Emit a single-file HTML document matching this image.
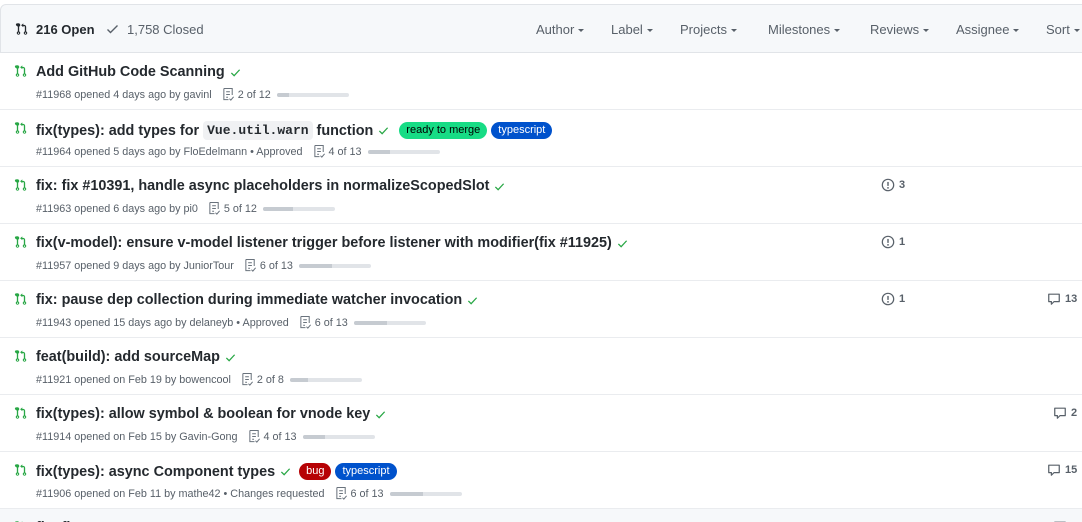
<!DOCTYPE html>
<html><head><meta charset="utf-8"><style>
*{box-sizing:border-box;margin:0;padding:0}
html,body{width:1082px;height:522px;overflow:hidden}
body{background:#fff;font-family:"Liberation Sans",sans-serif;color:#24292e;position:relative}
.hdr{position:absolute;left:0;top:4px;width:1090px;height:49px;background:#f6f8fa;border:1px solid #e1e4e8;border-radius:6px 0 0 0}
.hdr .t{position:absolute;top:17px;font-size:13px;color:#586069}
.caret{display:inline-block;width:0;height:0;border-left:3px solid transparent;border-right:3px solid transparent;border-top:3px solid #586069;vertical-align:middle;margin-left:4px}
.row{position:absolute;left:0;width:1090px;height:57px;border-bottom:1px solid #eaecef;overflow:hidden}
.ico{position:absolute;left:14px;top:10px}
.title{position:absolute;left:36px;top:11px;font-size:14.4px;font-weight:bold;white-space:nowrap;display:flex;align-items:center}
.meta{position:absolute;left:36px;top:34px;font-size:10.8px;color:#586069;white-space:nowrap;display:flex;align-items:center}
.chk{margin-left:5px}
.lbl{font-size:11px;font-weight:normal;border-radius:10px;padding:2px 7px;margin-left:4px;line-height:13px}
code{font-family:"Liberation Mono",monospace;font-size:13px;background:#f0f1f3;padding:2px 4px;border-radius:4px;margin:0 4px}
.task{display:inline-flex;align-items:center;margin-left:10px}
.bar{display:inline-block;width:72px;height:4px;background:#e1e4e8;border-radius:2px;margin-left:6px;position:relative;overflow:hidden}
.bar i{position:absolute;left:0;top:0;bottom:0;background:#c6cbd1}
.sn{position:absolute;top:11px;font-size:11px;font-weight:bold;color:#586069;display:flex;align-items:center}
.sn svg{margin-right:4px}
</style></head><body>
<div class="hdr">
 <svg style="position:absolute;left:14px;top:16px" width="14" height="16" viewBox="0 0 16 16" fill="#24292e"><path d="M4 3a1.5 1.5 0 1 0 0 .01zM3.25 5.3v5.4a2 2 0 1 0 1.5 0V5.3a2 2 0 1 0-1.5 0zM4 12a.75.75 0 1 1 0 1.5A.75.75 0 0 1 4 12zM12.75 10.7V5.5c0-1.2-1-2.25-2.25-2.25H9.5V1.5L7 3.75 9.5 6V4.75h1c.4 0 .75.35.75.75v5.2a2 2 0 1 0 1.5 0zM12 12a.75.75 0 1 1 0 1.5.75.75 0 0 1 0-1.5z"/></svg>
 <span class="t" style="left:35px;color:#24292e;font-weight:bold">216 Open</span>
 <svg style="position:absolute;left:105px;top:18px" width="13" height="12" viewBox="0 0 12 12"><path d="M1 6.5l3 3 7-7" stroke="#586069" stroke-width="1.4" fill="none"/></svg>
 <span class="t" style="left:126px">1,758 Closed</span>
 <span class="t" style="left:535px">Author<i class="caret"></i></span>
 <span class="t" style="left:610px">Label<i class="caret"></i></span>
 <span class="t" style="left:679px">Projects<i class="caret"></i></span>
 <span class="t" style="left:767px">Milestones<i class="caret"></i></span>
 <span class="t" style="left:869px">Reviews<i class="caret"></i></span>
 <span class="t" style="left:955px">Assignee<i class="caret"></i></span>
 <span class="t" style="left:1045px">Sort<i class="caret"></i></span>
</div>

<svg width="0" height="0" style="position:absolute"><defs>
<symbol id="pr" viewBox="0 0 16 16"><path fill="#28a745" d="M4 3a1.5 1.5 0 1 0 0 .01zM3.25 5.3v5.4a2 2 0 1 0 1.5 0V5.3a2 2 0 1 0-1.5 0zM4 12a.75.75 0 1 1 0 1.5A.75.75 0 0 1 4 12zM12.75 10.7V5.5c0-1.2-1-2.25-2.25-2.25H9.5V1.5L7 3.75 9.5 6V4.75h1c.4 0 .75.35.75.75v5.2a2 2 0 1 0 1.5 0zM12 12a.75.75 0 1 1 0 1.5.75.75 0 0 1 0-1.5z"/></symbol>
<symbol id="ck" viewBox="0 0 12 12"><path d="M1.5 6.5l3 3 6-6.5" stroke="#28a745" stroke-width="1.4" fill="none"/></symbol>
<symbol id="tk" viewBox="0 0 14 16"><path d="M2 1.5h9v7M2 1.5v12h5M4.5 5h4M4.5 8h4M4.5 11h2M8 12.5l1.5 1.5 3-3.5" stroke="#6a737d" stroke-width="1.1" fill="none"/></symbol>
<symbol id="is" viewBox="0 0 16 16"><circle cx="8" cy="8" r="6.5" stroke="#586069" stroke-width="1.4" fill="none"/><path d="M8 4.5v4.5" stroke="#586069" stroke-width="1.6"/><circle cx="8" cy="11.3" r="1" fill="#586069"/></symbol>
<symbol id="cm" viewBox="0 0 16 16"><path d="M2 2.5h12v8.5H8l-3 3v-3H2z" stroke="#586069" stroke-width="1.4" fill="none" stroke-linejoin="round"/></symbol>
</defs></svg>

<div class="row" style="top:53px">
 <svg class="ico" width="14" height="16"><use href="#pr"/></svg>
 <div class="title">Add GitHub Code Scanning<svg class="chk" width="11" height="11"><use href="#ck"/></svg></div>
 <div class="meta">#11968 opened 4 days ago by gavinl<span class="task"><svg width="13" height="15"><use href="#tk"/></svg>&nbsp;2 of 12<span class="bar"><i style="width:17%"></i></span></span></div>
</div>
<div class="row" style="top:110px">
 <svg class="ico" width="14" height="16"><use href="#pr"/></svg>
 <div class="title">fix(types): add types for<code>Vue.util.warn</code>function<svg class="chk" width="11" height="11"><use href="#ck"/></svg><span class="lbl" style="background:#17dc85;color:#000;margin-left:10px">ready to merge</span><span class="lbl" style="background:#0052cc;color:#fff">typescript</span></div>
 <div class="meta">#11964 opened 5 days ago by FloEdelmann • Approved<span class="task"><svg width="13" height="15"><use href="#tk"/></svg>&nbsp;4 of 13<span class="bar"><i style="width:31%"></i></span></span></div>
</div>
<div class="row" style="top:167px">
 <svg class="ico" width="14" height="16"><use href="#pr"/></svg>
 <div class="title">fix: fix #10391, handle async placeholders in normalizeScopedSlot<svg class="chk" width="11" height="11"><use href="#ck"/></svg></div>
 <div class="meta">#11963 opened 6 days ago by pi0<span class="task"><svg width="13" height="15"><use href="#tk"/></svg>&nbsp;5 of 12<span class="bar"><i style="width:42%"></i></span></span></div>
 <div class="sn" style="left:881px"><svg width="14" height="14"><use href="#is"/></svg>3</div>
</div>
<div class="row" style="top:224px">
 <svg class="ico" width="14" height="16"><use href="#pr"/></svg>
 <div class="title">fix(v-model): ensure v-model listener trigger before listener with modifier(fix #11925)<svg class="chk" width="11" height="11"><use href="#ck"/></svg></div>
 <div class="meta">#11957 opened 9 days ago by JuniorTour<span class="task"><svg width="13" height="15"><use href="#tk"/></svg>&nbsp;6 of 13<span class="bar"><i style="width:46%"></i></span></span></div>
 <div class="sn" style="left:881px"><svg width="14" height="14"><use href="#is"/></svg>1</div>
</div>
<div class="row" style="top:281px">
 <svg class="ico" width="14" height="16"><use href="#pr"/></svg>
 <div class="title">fix: pause dep collection during immediate watcher invocation<svg class="chk" width="11" height="11"><use href="#ck"/></svg></div>
 <div class="meta">#11943 opened 15 days ago by delaneyb • Approved<span class="task"><svg width="13" height="15"><use href="#tk"/></svg>&nbsp;6 of 13<span class="bar"><i style="width:46%"></i></span></span></div>
 <div class="sn" style="left:881px"><svg width="14" height="14"><use href="#is"/></svg>1</div>
 <div class="sn" style="left:1047px"><svg width="14" height="14"><use href="#cm"/></svg>13</div>
</div>
<div class="row" style="top:338px">
 <svg class="ico" width="14" height="16"><use href="#pr"/></svg>
 <div class="title">feat(build): add sourceMap<svg class="chk" width="11" height="11"><use href="#ck"/></svg></div>
 <div class="meta">#11921 opened on Feb 19 by bowencool<span class="task"><svg width="13" height="15"><use href="#tk"/></svg>&nbsp;2 of 8<span class="bar"><i style="width:25%"></i></span></span></div>
</div>
<div class="row" style="top:395px">
 <svg class="ico" width="14" height="16"><use href="#pr"/></svg>
 <div class="title">fix(types): allow symbol &amp; boolean for vnode key<svg class="chk" width="11" height="11"><use href="#ck"/></svg></div>
 <div class="meta">#11914 opened on Feb 15 by Gavin-Gong<span class="task"><svg width="13" height="15"><use href="#tk"/></svg>&nbsp;4 of 13<span class="bar"><i style="width:31%"></i></span></span></div>
 <div class="sn" style="left:1053px"><svg width="14" height="14"><use href="#cm"/></svg>2</div>
</div>
<div class="row" style="top:452px">
 <svg class="ico" width="14" height="16"><use href="#pr"/></svg>
 <div class="title">fix(types): async Component types<svg class="chk" width="11" height="11"><use href="#ck"/></svg><span class="lbl" style="background:#b60205;color:#fff;margin-left:8px">bug</span><span class="lbl" style="background:#0052cc;color:#fff">typescript</span></div>
 <div class="meta">#11906 opened on Feb 11 by mathe42 • Changes requested<span class="task"><svg width="13" height="15"><use href="#tk"/></svg>&nbsp;6 of 13<span class="bar"><i style="width:46%"></i></span></span></div>
 <div class="sn" style="left:1047px"><svg width="14" height="14"><use href="#cm"/></svg>15</div>
</div>
<div class="row" style="top:509px;height:13px;background:#f6f8fa;border-bottom:none">
 <svg class="ico" width="14" height="16"><use href="#pr"/></svg>
 <div class="title">fix: fix #10336</div>
 <div class="sn" style="left:1053px"><svg width="14" height="14"><use href="#cm"/></svg></div>
</div>
</body></html>
